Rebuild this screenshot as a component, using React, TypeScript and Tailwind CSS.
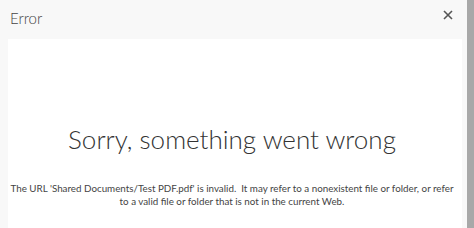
export default function App() {
  return (
    <div className="flex h-[228px] w-[474px] overflow-hidden border-r-[7px] border-[#a8a8a8] bg-[#f8f8f8] font-['Lato',sans-serif] text-[#333]">
      <div className="flex min-w-0 flex-1 flex-col">
        <div className="flex h-[39px] items-start justify-between pl-[10px] pr-[14px] pt-[8px]">
          <span className="text-[15px] font-light leading-[20px] text-[#444]">Error</span>
          <svg width="10" height="10" viewBox="0 0 10 10" className="mt-[2px]">
            <path d="M1 1 L9 9 M9 1 L1 9" stroke="#555" strokeWidth="1.6" />
          </svg>
        </div>
        <div className="ml-[8px] mr-[5px] flex flex-1 flex-col items-center bg-white pr-[6px] pt-[84px]">
          <h1 className="text-[26px] font-light leading-[32px] text-[#333]">Sorry, something went wrong</h1>
          <p className="mt-[27px] text-center text-[9.8px] leading-[13px] text-[#444]">
            The URL 'Shared Documents/Test PDF.pdf' is invalid.&nbsp; It may refer to a nonexistent file or folder, or refer to a valid file or folder that is not in the current Web.
          </p>
        </div>
      </div>
    </div>
  );
}
